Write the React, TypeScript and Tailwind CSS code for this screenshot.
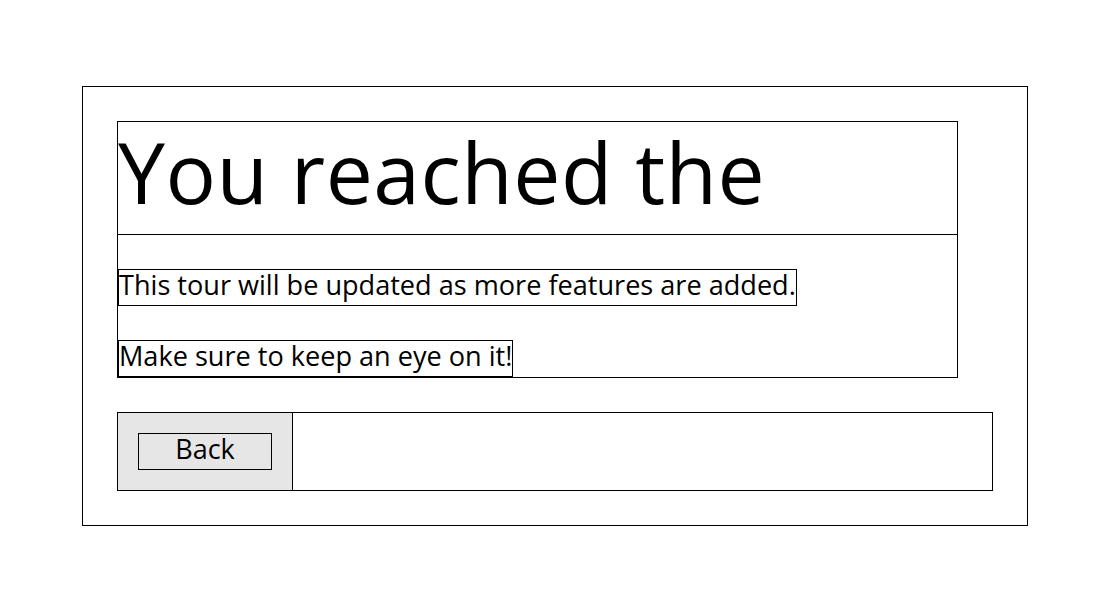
export default function App() {
  return (
    <div className="min-h-screen bg-white pt-[86px] pl-[82px] text-black" style={{ fontFamily: '"Open Sans", "Noto Sans", sans-serif' }}>
      <div className="flex w-[946px] flex-col gap-[34px] border border-black p-[34px]">
        <div className="flex w-[841px] flex-col border border-black">
          <h1 className="h-[113px] border-b border-black text-[84px] leading-[100px] tracking-[0.5px]">
            You reached the
          </h1>
          <div className="flex flex-col items-start gap-[34px] pt-[34px]">
            <p className="border border-black pb-[6px] text-[27.1px] leading-[29px]">
              This tour will be updated as more features are added.
            </p>
            <p className="border border-black pb-[6px] text-[27.1px] leading-[29px]">
              Make sure to keep an eye on it!
            </p>
          </div>
        </div>
        <div className="flex h-[79px] w-[876px] border border-black">
          <div className="flex w-[175px] items-center border-r border-black bg-[#e6e6e6] pl-[20px]">
            <button className="h-[37px] w-[134px] border border-black bg-[#e6e6e6] pb-[6px] text-[27px] leading-[29px]">
              Back
            </button>
          </div>
        </div>
      </div>
    </div>
  );
}
